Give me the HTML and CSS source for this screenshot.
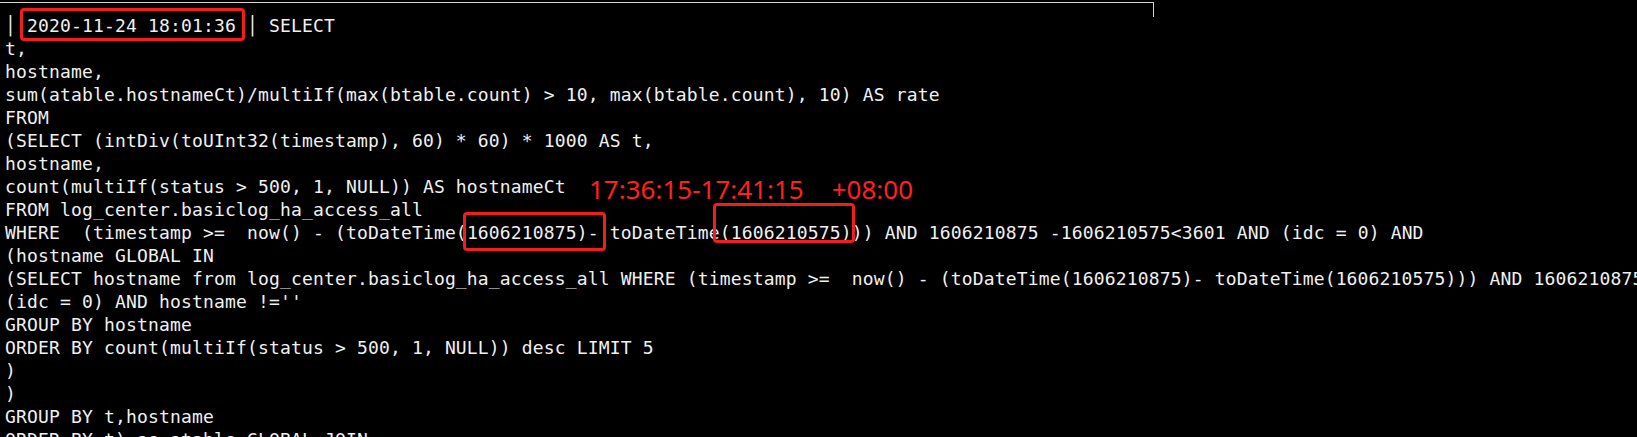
FILE: index.html
```html
<!DOCTYPE html>
<html>
<head>
<meta charset="utf-8">
<link rel="stylesheet" href="styles.css">
</head>
<body>
<div class="screen">
  <div class="rule"></div>
  <div class="term">
    <div class="line">│ <span class="mark m-date">2020-11-24 18:01:36</span> │ SELECT</div>
    <div class="line">t,</div>
    <div class="line">hostname,</div>
    <div class="line">sum(atable.hostnameCt)/multiIf(max(btable.count) &gt; 10, max(btable.count), 10) AS rate</div>
    <div class="line">FROM</div>
    <div class="line">(SELECT (intDiv(toUInt32(timestamp), 60) * 60) * 1000 AS t,</div>
    <div class="line">hostname,</div>
    <div class="line annotated">count(multiIf(status &gt; 500, 1, NULL)) AS hostnameCt<span class="note"><span>17:36:15-17:41:15</span><span class="tz">+08:00</span></span></div>
    <div class="line">FROM log_center.basiclog_ha_access_all</div>
    <div class="line">WHERE  (timestamp &gt;=  now() - (toDateTime(<span class="mark m-end">1606210875)-</span> toDateTime<span class="mark m-start">(1606210575)</span>)) AND 1606210875 -1606210575&lt;3601 AND (idc = 0) AND</div>
    <div class="line">(hostname GLOBAL IN</div>
    <div class="line">(SELECT hostname from log_center.basiclog_ha_access_all WHERE (timestamp &gt;=  now() - (toDateTime(1606210875)- toDateTime(1606210575))) AND 1606210875 -1606210575&lt;3601 AND</div>
    <div class="line">(idc = 0) AND hostname !=''</div>
    <div class="line">GROUP BY hostname</div>
    <div class="line">ORDER BY count(multiIf(status &gt; 500, 1, NULL)) desc LIMIT 5</div>
    <div class="line">)</div>
    <div class="line">)</div>
    <div class="line">GROUP BY t,hostname</div>
    <div class="line">ORDER BY t) as atable GLOBAL JOIN</div>
  </div>
</div>
</body>
</html>
```

FILE: styles.css
```css
html, body {
  margin: 0;
  padding: 0;
  background: #000;
}

body {
  width: 1637px;
  height: 437px;
  overflow: hidden;
}

.screen {
  width: 1637px;
  height: 437px;
  overflow: hidden;
  background: #000;
}

.rule {
  margin-top: 2px;
  width: 1153px;
  height: 14px;
  border-top: 1px solid #d6d6d6;
  border-right: 1px solid #d6d6d6;
}

.term {
  margin-top: -3px;
  padding-left: 5px;
  font-family: "DejaVu Sans Mono", "Liberation Mono", monospace;
  font-size: 18px;
  letter-spacing: 0.16px;
  line-height: 23px;
  color: #f0f0f0;
}

.line {
  white-space: pre;
  height: 23px;
}

.annotated {
  position: relative;
}

.mark {
  position: relative;
}

.mark::after {
  content: "";
  position: absolute;
  border: 3px solid #f21d1d;
  border-radius: 4px;
}

.m-date::after {
  left: -7px;
  right: -9px;
  top: -7px;
  bottom: -5px;
}

.m-end::after {
  left: -4px;
  right: -7px;
  top: -10px;
  bottom: -8px;
}

.m-start::after {
  left: -7px;
  right: -3px;
  top: -19px;
  bottom: 0;
}

.note {
  position: absolute;
  left: 584px;
  top: 1px;
  font-family: "Noto Sans", "Liberation Sans", sans-serif;
  font-size: 26px;
  line-height: 26px;
  letter-spacing: 0;
  color: #ff2020;
  white-space: nowrap;
  display: flex;
  gap: 28px;
}
```
